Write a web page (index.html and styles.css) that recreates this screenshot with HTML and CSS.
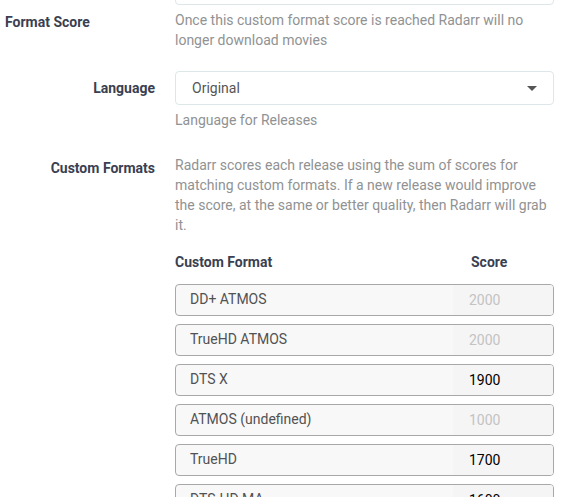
FILE: index.html
```html
<!DOCTYPE html>
<html lang="en">
<head>
<meta charset="UTF-8">
<meta name="viewport" content="width=device-width, initial-scale=1.0">
<title>Quality Profile</title>
<link rel="stylesheet" href="styles.css">
</head>
<body>
<div class="form">
  <div class="group first">
    <label class="label left">Format Score</label>
    <div class="field">
      <input class="input" type="text" value="0">
      <div class="help">Once this custom format score is reached Radarr will no longer download movies</div>
    </div>
  </div>

  <div class="group">
    <label class="label">Language</label>
    <div class="field">
      <div class="select">
        <span>Original</span>
        <span class="caret"></span>
      </div>
      <div class="help">Language for Releases</div>
    </div>
  </div>

  <div class="group formats">
    <label class="label">Custom Formats</label>
    <div class="field">
      <div class="help">Radarr scores each release using the sum of scores for matching custom formats. If a new release would improve the score, at the same or better quality, then Radarr will grab it.</div>

      <div class="cf-head">
        <span>Custom Format</span>
        <span class="score-head">Score</span>
      </div>

      <div class="cf-row">
        <span class="cf-name">DD+ ATMOS</span>
        <span class="cf-score muted">2000</span>
      </div>
      <div class="cf-row">
        <span class="cf-name">TrueHD ATMOS</span>
        <span class="cf-score muted">2000</span>
      </div>
      <div class="cf-row">
        <span class="cf-name">DTS X</span>
        <span class="cf-score">1900</span>
      </div>
      <div class="cf-row">
        <span class="cf-name">ATMOS (undefined)</span>
        <span class="cf-score muted">1000</span>
      </div>
      <div class="cf-row">
        <span class="cf-name">TrueHD</span>
        <span class="cf-score">1700</span>
      </div>
      <div class="cf-row">
        <span class="cf-name">DTS-HD MA</span>
        <span class="cf-score">1600</span>
      </div>
    </div>
  </div>
</div>
</body>
</html>
```

FILE: styles.css
```css
body {
  margin: 0;
  font-family: Roboto, "Open Sans", sans-serif;
  font-size: 14px;
  color: #515253;
  background-color: #fff;
  overflow: hidden;
}

.form {
  margin-top: -30px;
  padding-left: 5px;
  width: 549px;
}

.group {
  display: flex;
  margin-top: 21px;
}

.group.first {
  margin-top: 0;
}

.group.formats {
  margin-top: 25px;
}

.label {
  width: 150px;
  margin-right: 20px;
  padding-top: 7px;
  line-height: 20px;
  font-weight: bold;
  color: #3a3f51;
  text-align: right;
  flex-shrink: 0;
}

.label.left {
  text-align: left;
  padding-top: 42px;
}

.formats .label {
  padding-top: 3px;
}

.field {
  flex: 1;
}

.input {
  display: block;
  box-sizing: border-box;
  width: 100%;
  height: 35px;
  padding: 6px 16px;
  border: 1px solid #dde6e9;
  border-radius: 4px;
  font-family: inherit;
  font-size: 14px;
  color: #555;
}

.select {
  box-sizing: border-box;
  height: 34px;
  padding: 0 16px;
  border: 1px solid #dde6e9;
  border-radius: 4px;
  display: flex;
  align-items: center;
  justify-content: space-between;
  color: #555;
}

.caret {
  width: 0;
  height: 0;
  border-left: 5px solid transparent;
  border-right: 5px solid transparent;
  border-top: 5px solid #555;
}

.help {
  margin-top: 5px;
  line-height: 20px;
  color: #909293;
}

.formats .help {
  margin-top: 0;
}

.cf-head {
  display: flex;
  margin-top: 16px;
  height: 33px;
  line-height: 22px;
  font-weight: bold;
  color: #3a3f51;
}

.cf-head span:first-child {
  width: 296px;
}

.cf-row {
  display: flex;
  box-sizing: border-box;
  height: 32px;
  margin-bottom: 8px;
  border: 1px solid #a8a8a8;
  border-radius: 4px;
  background-color: #f8f8f8;
  overflow: hidden;
}

.cf-name {
  flex: 1;
  padding-left: 14px;
  line-height: 28px;
  color: #515253;
}

.cf-score {
  width: 84px;
  padding-left: 16px;
  line-height: 31px;
  background-color: #f5f5f5;
  color: #000;
}

.cf-score.muted {
  color: #c3c3c3;
}
```
